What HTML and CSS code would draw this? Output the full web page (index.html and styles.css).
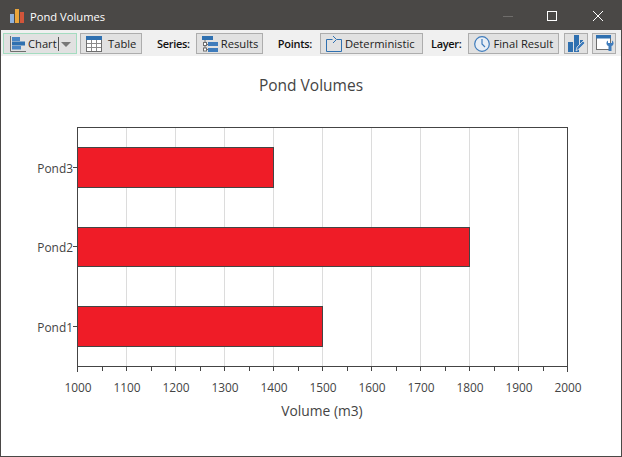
FILE: index.html
```html
<!DOCTYPE html>
<html lang="en">
<head>
<meta charset="utf-8">
<title>Pond Volumes</title>
<link rel="stylesheet" href="styles.css">
</head>
<body>
<div class="window">
  <header class="titlebar">
    <svg class="app-icon" width="16" height="16" viewBox="0 0 16 16">
      <rect x="0" y="6" width="4" height="9" fill="#8db0dc"/>
      <rect x="5" y="1" width="4" height="14" fill="#e9a53c"/>
      <rect x="10" y="4" width="4" height="11" fill="#d2553a"/>
    </svg>
    <span class="title">Pond Volumes</span>
    <div class="controls">
      <svg class="ctl ctl-min" width="12" height="12" viewBox="0 0 12 12"><path d="M1 6.500h10" stroke="#6f6d6b" fill="none"/></svg>
      <svg class="ctl ctl-max" width="12" height="12" viewBox="0 0 12 12"><rect x="1.500" y="1.500" width="9" height="9" stroke="#fff" fill="none"/></svg>
      <svg class="ctl ctl-close" width="12" height="12" viewBox="0 0 12 12"><path d="M1 1l10 10M11 1L1 11" stroke="#fff" fill="none"/></svg>
    </div>
  </header>
  <nav class="toolbar">
    <div class="btn btn-chart">
      <svg width="16" height="16" viewBox="0 0 16 16">
        <path d="M.5 0v15.500H16" stroke="#6e6e6e" fill="none"/>
        <rect x="2" y="1" width="8" height="4" fill="#4a86c5"/>
        <rect x="2" y="5.500" width="13" height="4" fill="#2f70b0"/>
        <rect x="2" y="10" width="9" height="3.500" fill="#4a86c5"/>
      </svg>
      <span>Chart</span>
      <i class="sep"></i>
      <i class="caret"></i>
    </div>
    <div class="btn btn-table">
      <svg width="16" height="16" viewBox="0 0 16 16">
        <rect x=".5" y=".5" width="15" height="15" fill="#fff" stroke="#6e6e6e"/>
        <rect x="0" y="0" width="16" height="4" fill="#2f70b0"/>
        <path d="M5.500 4v11M10.500 4v11M1 7.500h14M1 11.500h14" stroke="#8a8a8a" fill="none"/>
      </svg>
      <span>Table</span>
    </div>
    <b class="label label-series">Series:</b>
    <div class="btn btn-results">
      <svg width="16" height="16" viewBox="0 0 16 16">
        <rect x="0" y="0" width="11" height="4" fill="#2f70b0"/>
        <path d="M3 4v9.500H6M3 8.500H6" stroke="#6e6e6e" fill="none"/>
        <rect x="1.500" y="6.500" width="3" height="3" fill="#fff" stroke="#6e6e6e"/>
        <rect x="1.500" y="12" width="3" height="3" fill="#fff" stroke="#6e6e6e"/>
        <rect x="6" y="6" width="10" height="4" fill="#3f7cbc"/>
        <rect x="6" y="12" width="10" height="4" fill="#3f7cbc"/>
      </svg>
      <span>Results</span>
    </div>
    <b class="label label-points">Points:</b>
    <div class="btn btn-det">
      <svg width="16" height="16" viewBox="0 0 16 16">
        <path d="M6.500 3.500H.5v12h15v-12H11" stroke="#2f70b0" fill="none"/>
        <path d="M7 0l3.500 3.500L7 7" stroke="#2f70b0" fill="none"/>
      </svg>
      <span>Deterministic</span>
    </div>
    <b class="label label-layer">Layer:</b>
    <div class="btn btn-layer">
      <svg width="16" height="16" viewBox="0 0 16 16">
        <circle cx="8" cy="8" r="7.300" fill="#e8eef5" stroke="#3f7cbc" stroke-width="1.200"/>
        <path d="M8 3v5l3 3" stroke="#3f7cbc" fill="none" stroke-width="1.200"/>
      </svg>
      <span>Final Result</span>
    </div>
    <div class="btn btn-icon btn-edit">
      <svg width="17" height="17" viewBox="0 0 17 17">
        <rect x="0" y="7" width="5" height="10" fill="#2f70b0"/>
        <rect x="6" y="0" width="5" height="17" fill="#2f70b0"/>
        <rect x="12" y="5" width="3" height="5" fill="#2f70b0"/>
        <path d="M8 16l1-4 6-6 2 2-6 6z" fill="#3f7cbc" stroke="#e4e4e4" stroke-width=".8"/>
      </svg>
    </div>
    <div class="btn btn-icon btn-settings">
      <svg width="19" height="17" viewBox="0 0 19 17">
        <rect x=".5" y=".5" width="14" height="14" fill="#fff" stroke="#6e6e6e"/>
        <rect x="0" y="0" width="15" height="3.500" fill="#2f70b0"/>
        <path d="M12 5.500a3 3 0 0 0 .5 5.500V16h3v-5a3 3 0 0 0 .5-5.500V8h-4z" fill="#3f7cbc"/>
      </svg>
    </div>
  </nav>
  <main class="chart-pane">
    <svg class="chart" width="620" height="400" viewBox="0 0 620 400">
      <text class="chart-title" x="310" y="35" text-anchor="middle">Pond Volumes</text>
      <g class="grid">
        <path d="M125.500 71v239M174.500 71v239M223.500 71v239M272.500 71v239M321.500 71v239M370.500 71v239M419.500 71v239M468.500 71v239M517.500 71v239"/>
      </g>
      <g class="bars">
        <rect x="76.500" y="91.500" width="196" height="40"/>
        <rect x="76.500" y="171.500" width="392" height="39"/>
        <rect x="76.500" y="250.500" width="245" height="40"/>
      </g>
      <rect class="frame" x="76.500" y="71.500" width="490" height="239"/>
      <path class="ticks" d="M76.500 310v6M101.500 310v5M125.500 310v5M150.500 310v5M174.500 310v5M199.500 310v5M223.500 310v5M248.500 310v5M272.500 310v5M297.500 310v5M321.500 310v5M346.500 310v5M370.500 310v5M395.500 310v5M419.500 310v5M444.500 310v5M468.500 310v5M493.500 310v5M517.500 310v5M542.500 310v5M566.500 310v6M72 111.500h5M72 190.500h5M72 270.500h5"/>
      <g class="axis-text">
        <text x="72" y="117" text-anchor="end">Pond3</text>
        <text x="72" y="196" text-anchor="end">Pond2</text>
        <text x="72" y="276" text-anchor="end">Pond1</text>
        <text x="77" y="336" text-anchor="middle">1000</text>
        <text x="126" y="336" text-anchor="middle">1100</text>
        <text x="175" y="336" text-anchor="middle">1200</text>
        <text x="224" y="336" text-anchor="middle">1300</text>
        <text x="273" y="336" text-anchor="middle">1400</text>
        <text x="322" y="336" text-anchor="middle">1500</text>
        <text x="371" y="336" text-anchor="middle">1600</text>
        <text x="420" y="336" text-anchor="middle">1700</text>
        <text x="469" y="336" text-anchor="middle">1800</text>
        <text x="518" y="336" text-anchor="middle">1900</text>
        <text x="567" y="336" text-anchor="middle">2000</text>
      </g>
      <text class="axis-title" x="321" y="360" text-anchor="middle">Volume (m3)</text>
    </svg>
  </main>
</div>
</body>
</html>
```

FILE: styles.css
```css
* { box-sizing: border-box; }
html, body { margin: 0; padding: 0; }
body {
  width: 622px;
  height: 457px;
  overflow: hidden;
  font-family: "Open Sans", "Noto Sans", sans-serif;
}
.window {
  width: 622px;
  height: 457px;
  display: flex;
  flex-direction: column;
  border: 1px solid #4a4846;
  border-top: 0;
  background: #fff;
}
.titlebar {
  height: 30px;
  flex: none;
  background: #4a4846;
  display: flex;
  align-items: center;
  padding: 2px 0 0 9px;
  color: #fff;
}
.app-icon { flex: none; }
.title {
  margin-left: 4px;
  font-size: 11.2px;
  color: #fff;
}
.controls {
  margin-left: auto;
  display: flex;
  align-items: center;
}
.ctl { display: block; }
.ctl-min { margin-right: 32px; }
.ctl-max { margin-right: 34px; }
.ctl-close { margin-right: 17px; }
.toolbar {
  height: 26px;
  flex: none;
  background: #f0f0f0;
  display: flex;
  align-items: center;
  padding: 1px 0 0 2px;
  font-size: 11.2px;
  color: #222;
}
.btn {
  height: 21px;
  display: flex;
  align-items: center;
  background: #e1e1e1;
  border: 1px solid #adadad;
  padding-left: 5px;
  flex: none;
  white-space: nowrap;
}
.btn svg { flex: none; }
.btn span { margin-left: 3px; }
.btn-chart { width: 74px; border-color: #a4dcc0; padding-left: 6px; }
.btn-chart span { margin-left: 2px; }
.btn-chart .sep { width: 1px; height: 14px; background: #555; margin-left: 1px; }
.btn-chart .caret {
  width: 0;
  height: 0;
  margin-left: 2px;
  margin-top: 2px;
  border-left: 5px solid transparent;
  border-right: 5px solid transparent;
  border-top: 5px solid #777;
}
.btn-table { width: 62px; margin-left: 3px; }
.btn-table span { margin-left: 6px; }
.label {
  font-weight: 600;
  font-size: 11px;
  letter-spacing: -0.3px;
  color: #111;
  flex: none;
}
.label-series { margin-left: 15px; }
.btn-results { width: 67px; margin-left: 6px; }
.label-points { margin-left: 15px; }
.btn-det { width: 103px; margin-left: 8px; }
.label-layer { margin-left: 8px; }
.btn-layer { width: 91px; margin-left: 6px; }
.btn-layer span { margin-left: 4px; }
.btn-icon { width: 24px; padding-left: 3px; }
.btn-edit { margin-left: 5px; }
.btn-settings { margin-left: 4px; }
.chart-pane { flex: 1; min-height: 0; }
.chart { display: block; }
.chart-title { font-size: 15.5px; fill: #444; }
.grid path { stroke: #dcdcdc; fill: none; }
.bars rect { fill: #ef1c27; stroke: #444; }
.frame { fill: none; stroke: #444; }
.ticks { stroke: #444; fill: none; }
.axis-text text { font-size: 11.9px; fill: #444; }
.axis-title { font-size: 13.8px; fill: #444; }
```
